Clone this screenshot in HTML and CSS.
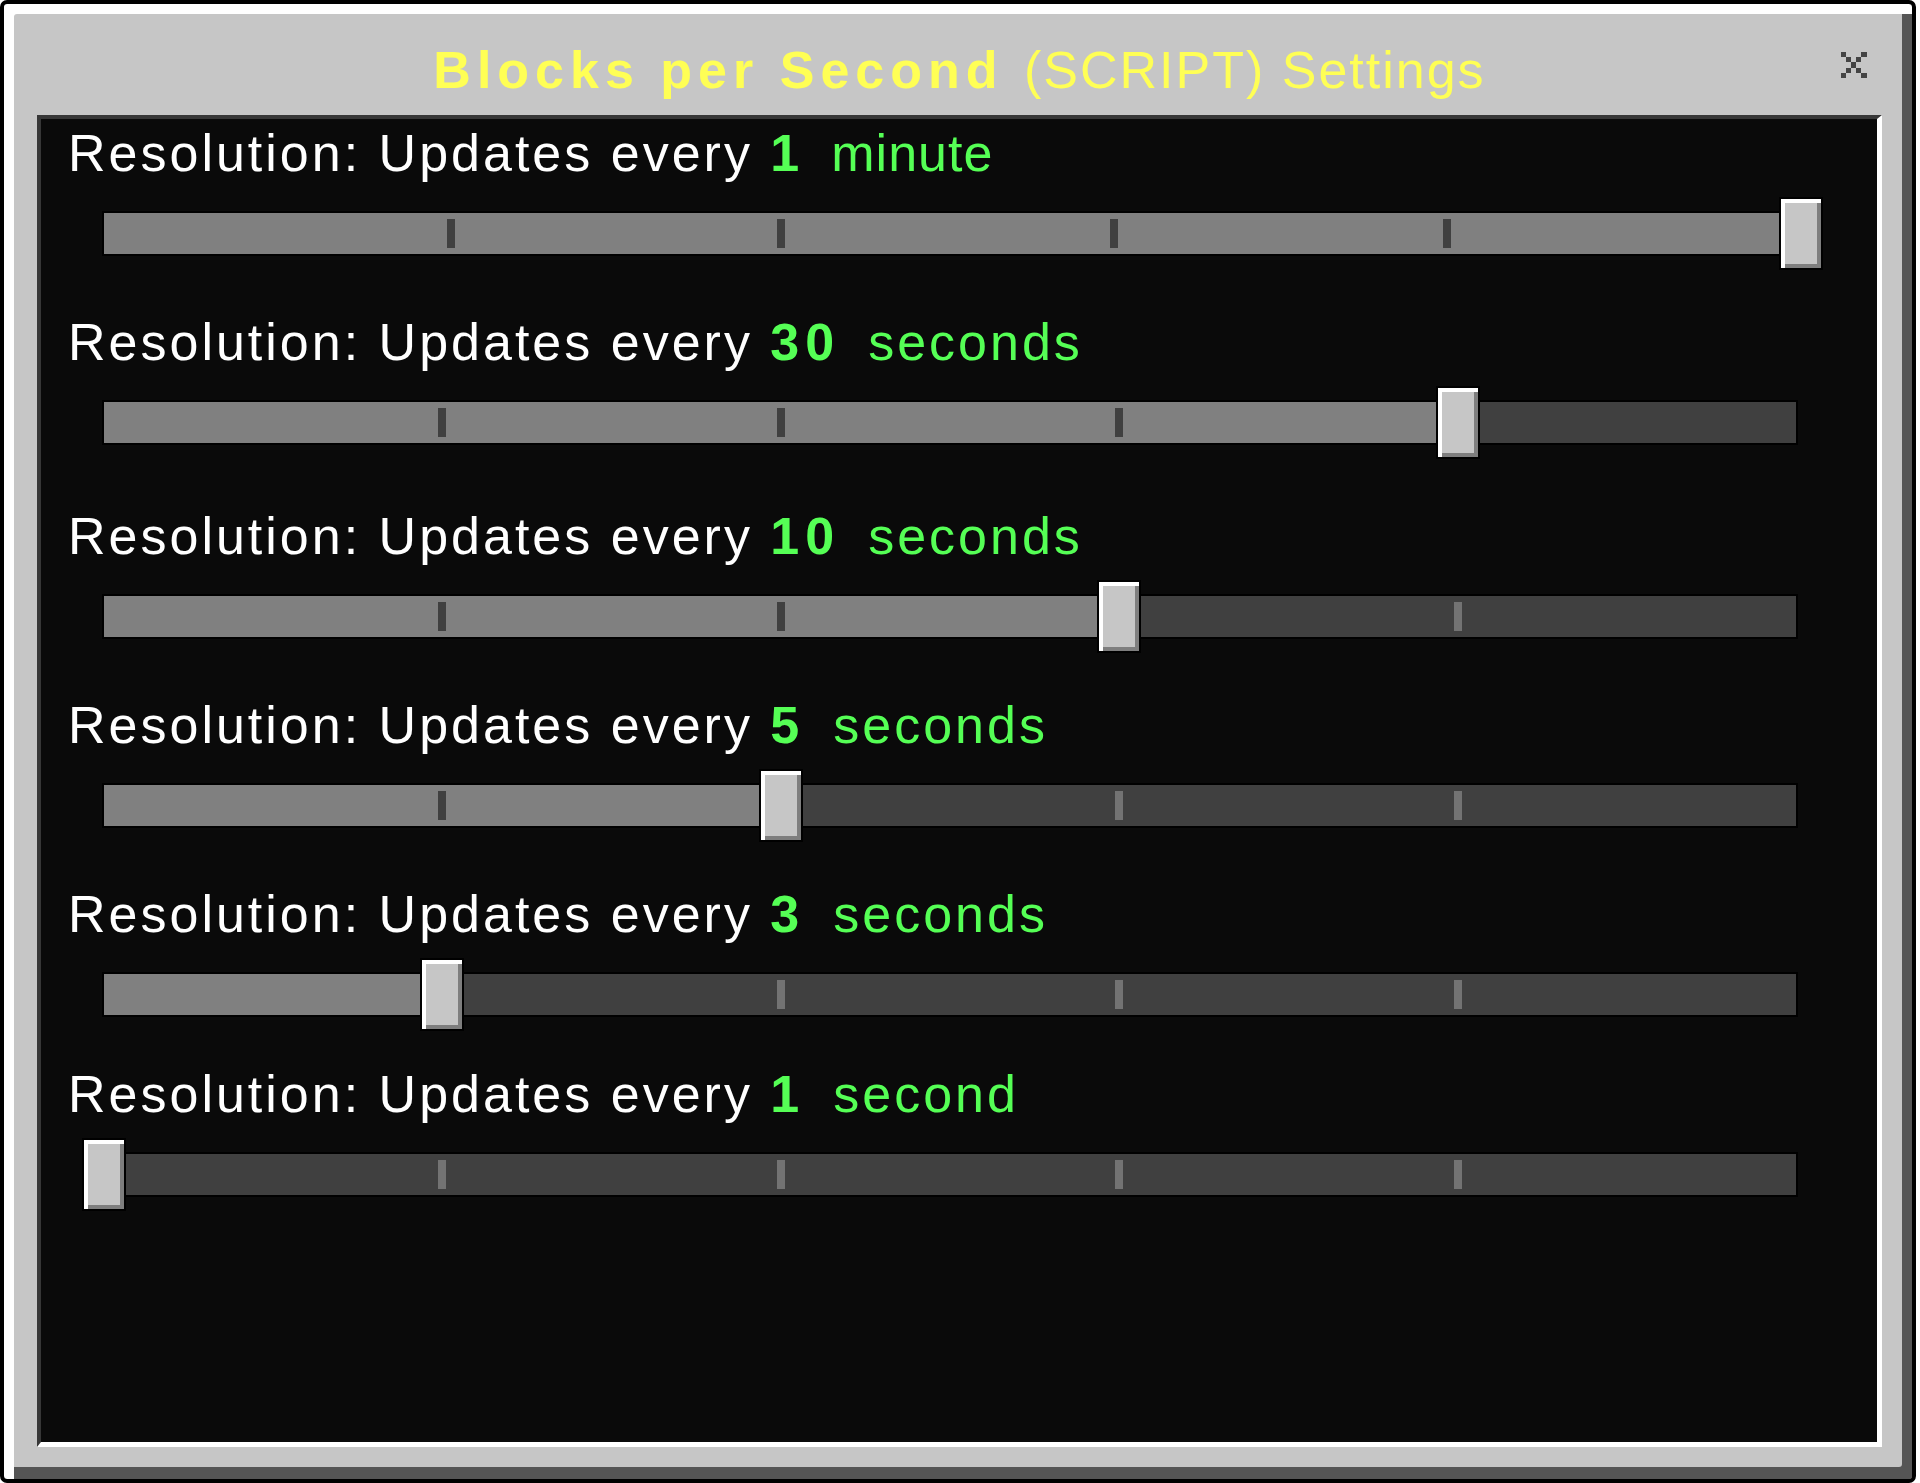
FILE: index.html
```html
<!DOCTYPE html>
<html lang="en">
<head>
<meta charset="utf-8">
<title>Blocks per Second (SCRIPT) Settings</title>
<link rel="stylesheet" href="styles.css">
</head>
<body>
<div class="window">
  <div class="titlebar">
    <h1 class="title"><b class="title-main">Blocks per Second </b><span class="title-sub">(SCRIPT) Settings</span></h1>
    <svg class="close" width="27" height="26" viewBox="0 0 5 5" shape-rendering="crispEdges" aria-label="Close">
      <rect x="0" y="0" width="1" height="1"/><rect x="4" y="0" width="1" height="1"/>
      <rect x="1" y="1" width="1" height="1"/><rect x="3" y="1" width="1" height="1"/>
      <rect x="2" y="2" width="1" height="1"/>
      <rect x="1" y="3" width="1" height="1"/><rect x="3" y="3" width="1" height="1"/>
      <rect x="0" y="4" width="1" height="1"/><rect x="4" y="4" width="1" height="1"/>
    </svg>
  </div>
  <div class="panel">
    <div class="row">
      <div class="label">Resolution: Updates every <b class="num">1</b><span class="unit tight">minute</span></div>
      <div class="slider">
        <div class="track">
          <div class="fill" style="width:100%"></div>
          <i class="tick on" style="left:20.5%"></i><i class="tick on" style="left:40%"></i><i class="tick on" style="left:59.7%"></i><i class="tick on" style="left:79.4%"></i>
          <div class="thumb" style="left:100.3%"></div>
        </div>
      </div>
    </div>
    <div class="row">
      <div class="label">Resolution: Updates every <b class="num">30</b><span class="unit">seconds</span></div>
      <div class="slider">
        <div class="track">
          <div class="fill" style="width:80%"></div>
          <i class="tick on" style="left:20%"></i><i class="tick on" style="left:40%"></i><i class="tick on" style="left:60%"></i><i class="tick on" style="left:80%"></i>
          <div class="thumb" style="left:80%"></div>
        </div>
      </div>
    </div>
    <div class="row">
      <div class="label">Resolution: Updates every <b class="num">10</b><span class="unit">seconds</span></div>
      <div class="slider">
        <div class="track">
          <div class="fill" style="width:60%"></div>
          <i class="tick on" style="left:20%"></i><i class="tick on" style="left:40%"></i><i class="tick on" style="left:60%"></i><i class="tick off" style="left:80%"></i>
          <div class="thumb" style="left:60%"></div>
        </div>
      </div>
    </div>
    <div class="row">
      <div class="label">Resolution: Updates every <b class="num">5</b><span class="unit">seconds</span></div>
      <div class="slider">
        <div class="track">
          <div class="fill" style="width:40%"></div>
          <i class="tick on" style="left:20%"></i><i class="tick on" style="left:40%"></i><i class="tick off" style="left:60%"></i><i class="tick off" style="left:80%"></i>
          <div class="thumb" style="left:40%"></div>
        </div>
      </div>
    </div>
    <div class="row">
      <div class="label">Resolution: Updates every <b class="num">3</b><span class="unit">seconds</span></div>
      <div class="slider">
        <div class="track">
          <div class="fill" style="width:20%"></div>
          <i class="tick on" style="left:20%"></i><i class="tick off" style="left:40%"></i><i class="tick off" style="left:60%"></i><i class="tick off" style="left:80%"></i>
          <div class="thumb" style="left:20%"></div>
        </div>
      </div>
    </div>
    <div class="row">
      <div class="label">Resolution: Updates every <b class="num">1</b><span class="unit">second</span></div>
      <div class="slider">
        <div class="track">
          <div class="fill" style="width:0%"></div>
          <i class="tick off" style="left:20%"></i><i class="tick off" style="left:40%"></i><i class="tick off" style="left:60%"></i><i class="tick off" style="left:80%"></i>
          <div class="thumb" style="left:0%"></div>
        </div>
      </div>
    </div>
  </div>
</div>
</body>
</html>
```
FILE: styles.css
```css
html, body {
  margin: 0;
  padding: 0;
  background: #ffffff;
}

body {
  width: 1920px;
  height: 1483px;
  overflow: hidden;
  font-family: "Liberation Sans", Arial, sans-serif;
}

.window {
  box-sizing: border-box;
  width: 1916px;
  height: 1483px;
  border: 4px solid #000;
  border-radius: 7px;
  background: #c6c6c6;
  box-shadow: inset 10px 10px 0 #ffffff, inset -10px -12px 0 #555555;
  padding: 0 30px 32px 33px;
  display: flex;
  flex-direction: column;
}

.titlebar {
  position: relative;
  box-sizing: border-box;
  height: 111px;
  padding-top: 40px;
  flex: none;
}

.title {
  margin: 0;
  font-size: 52px;
  line-height: 52px;
  font-weight: normal;
  text-align: center;
  color: #ffff55;
  white-space: nowrap;
}

.title-main {
  font-weight: bold;
  letter-spacing: 6px;
}

.title-sub {
  letter-spacing: 2px;
}

.close {
  position: absolute;
  top: 48px;
  right: 15px;
  fill: #444444;
}

.panel {
  flex: 1;
  box-sizing: border-box;
  background: #0a0a0a;
  border-top: 4px solid #373737;
  border-left: 4px solid #373737;
  border-right: 5px solid #ffffff;
  border-bottom: 5px solid #ffffff;
  padding: 8px 60px 0 0;
  display: flex;
  flex-direction: column;
  gap: 46px;
}

.row {
  display: flex;
  flex-direction: column;
}

.row:nth-child(3) {
  margin-top: 5px;
}

.row:nth-child(6) {
  margin-top: -9px;
}

.label {
  padding-left: 27px;
  font-size: 52px;
  line-height: 52px;
  letter-spacing: 3px;
  color: #ffffff;
  white-space: nowrap;
}

.num {
  color: #55ff55;
  font-weight: bold;
  letter-spacing: 6px;
}

.unit {
  color: #55ff55;
  margin-left: 28px;
}

.unit.tight {
  letter-spacing: 1px;
  margin-left: 26px;
}

.slider {
  margin-top: 18px;
  margin-left: 42px;
  padding: 16px 21px;
}

.track {
  position: relative;
  height: 41px;
  background: #404040;
  box-shadow: 0 0 0 2px #000;
}

.fill {
  height: 100%;
  background: #808080;
}

.tick {
  position: absolute;
  top: 6px;
  width: 8px;
  height: 29px;
  margin-left: -4px;
}

.tick.on {
  background: #404040;
}

.tick.off {
  background: #737373;
}

.thumb {
  position: absolute;
  top: -16px;
  width: 44px;
  height: 73px;
  margin-left: -22px;
  box-sizing: border-box;
  background: #c6c6c6;
  border: 2px solid #000;
  box-shadow: inset 4px 4px 0 #ffffff, inset -4px -4px 0 #7e7e7e;
}
```
